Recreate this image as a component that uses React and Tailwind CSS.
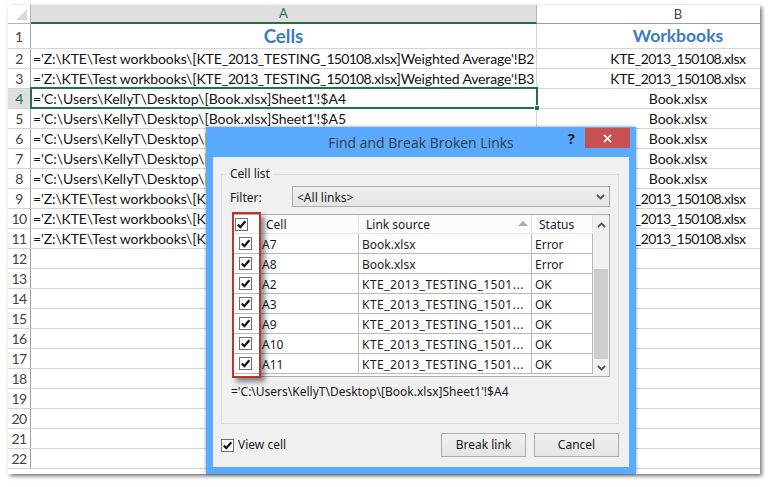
const Z = n => `='Z:\\KTE\\Test workbooks\\[KTE_2013_TESTING_150108.xlsx]Weighted Average'!B${n}`;
const C = n => `='C:\\Users\\KellyT\\Desktop\\[Book.xlsx]Sheet1'!$A${n}`;
const K = "KTE_2013_150108.xlsx";
const B = "Book.xlsx";
const data = [
  [Z(2), K], [Z(3), K], [C(4), B], [C(5), B], [C(6), B], [C(7), B], [C(8), B], [Z(9), K], [Z(10), K], [Z(11), K],
];
const rows = Array.from({ length: 21 }, (_, i) => i + 2);

const links = [
  ["A7", "Book.xlsx", "Error"],
  ["A8", "Book.xlsx", "Error"],
  ["A2", "KTE_2013_TESTING_1501...", "OK"],
  ["A3", "KTE_2013_TESTING_1501...", "OK"],
  ["A9", "KTE_2013_TESTING_1501...", "OK"],
  ["A10", "KTE_2013_TESTING_1501...", "OK"],
  ["A11", "KTE_2013_TESTING_1501...", "OK"],
];

// Lato's figures are wider than the sheet font's, so digit runs get tighter spacing.
function T({ children }) {
  const parts = String(children).split(/(\d+)/);
  return (
    <span>
      {parts.map((p, i) =>
        /^\d/.test(p) ? <span key={i} className="tracking-[-0.7px]">{p}</span> : <span key={i}>{p}</span>
      )}
    </span>
  );
}

function Check() {
  return (
    <span className="flex h-[13px] w-[13px] shrink-0 items-center justify-center border border-[#707070] bg-white">
      <svg viewBox="0 0 11 11" className="h-[11px] w-[11px]">
        <path d="M1.8 5.6 L4.3 8.2 L9.3 2.2" fill="none" stroke="#111" strokeWidth="2.2" />
      </svg>
    </span>
  );
}

function Chevron({ up }) {
  return (
    <svg viewBox="0 0 9 6" className="h-[6px] w-[9px]">
      <path d={up ? "M1 5 L4.5 1.5 L8 5" : "M1 1 L4.5 4.5 L8 1"} fill="none" stroke="#555" strokeWidth="1.8" />
    </svg>
  );
}

function Dialog() {
  return (
    <div className="absolute left-[206px] top-[127px] flex h-[347px] w-[430px] flex-col bg-[#5aabff] font-['Noto_Sans',sans-serif] text-[12px] text-[#1a1a1a] shadow-[0_0_3px_rgba(0,0,0,0.45)]">
      <div className="relative flex h-[30px] shrink-0 items-center justify-center text-[14px] text-[#3a3a3a] font-['Open_Sans',sans-serif]">
        Find and Break Broken Links
        <span className="absolute right-[61px] top-[0px] text-[15px] font-bold text-[#222]">?</span>
        <span className="absolute right-[6px] top-[1px] flex h-[20px] w-[45px] items-center justify-center bg-[#c75050]">
          <svg viewBox="0 0 10 10" className="h-[9px] w-[9px]">
            <path d="M1 1 L9 9 M9 1 L1 9" stroke="#fff" strokeWidth="1.8" />
          </svg>
        </span>
      </div>
      <div className="mb-[7px] ml-[7px] mr-[7px] flex min-h-0 flex-1 flex-col bg-[#f0f0f0] pl-[8px] pr-[10px]">
        <div className="relative mt-[17px] h-[250px] shrink-0 border border-[#dcdcdc] pl-[8px] pr-[8px]">
          <span className="absolute left-[5px] top-[-10px] bg-[#f0f0f0] px-[3px] leading-[18px]">Cell list</span>
          <div className="mt-[11px] flex items-center">
            <span className="w-[62px] shrink-0 pt-[2px]">Filter:</span>
            <div className="flex h-[21px] flex-1 items-center justify-between border border-[#acacac] bg-gradient-to-b from-[#f0f0f0] to-[#e5e5e5] pl-[4px] pr-[4px]">
              <span className="pt-[2px]">&lt;All links&gt;</span>
              <Chevron />
            </div>
          </div>
          <div className="ml-[2px] mt-[7px] flex h-[163px] border border-[#acacac] bg-white">
            <div className="flex w-[360px] shrink-0 flex-col">
              <div className="flex h-[19px] shrink-0 border-b border-[#e5e5e5] bg-[#fafcfe]">
                <div className="flex w-[28px] shrink-0 items-center pl-[2px]"><Check /></div>
                <div className="flex w-[98px] shrink-0 items-center border-r border-[#e5e5e5] pl-[5px] pt-[2px]">Cell</div>
                <div className="relative flex w-[173px] shrink-0 items-center border-r border-[#e5e5e5] pl-[7px] pt-[2px]">
                  Link source
                  <span className="absolute right-[3px] top-[6px] h-0 w-0 border-x-[5px] border-b-[5px] border-x-transparent border-b-[#a8a8a8]"></span>
                </div>
                <div className="flex flex-1 items-center border-r border-[#e5e5e5] pl-[7px] pt-[2px]">Status</div>
              </div>
              {links.map(([cell, src, st]) => (
                <div key={cell} className="flex h-[20px] shrink-0 border-b border-[#b9b9b9]">
                  <div className="flex w-[28px] shrink-0 items-center pl-[6px]"><Check /></div>
                  <div className="flex w-[98px] shrink-0 items-center border-r border-[#b9b9b9] pl-[1px] pt-[2px]">{cell}</div>
                  <div className={`flex w-[173px] shrink-0 items-center whitespace-nowrap border-r border-[#b9b9b9] pl-[3px] pt-[2px] ${src.startsWith("KTE") ? "tracking-[0.5px]" : ""}`}>{src}</div>
                  <div className="flex flex-1 items-center border-r border-[#b9b9b9] pl-[3px] pt-[2px]">{st}</div>
                </div>
              ))}
            </div>
            <div className="flex flex-1 flex-col bg-[#f0f0f0]">
              <div className="flex h-[19px] shrink-0 items-center justify-center"><Chevron up /></div>
              <div className="flex-1"></div>
              <div className="mx-[1px] h-[90px] shrink-0 bg-[#cdcdcd]"></div>
              <div className="flex h-[17px] shrink-0 items-center justify-center"><Chevron /></div>
            </div>
          </div>
          <div className="mt-[6px] pl-[1px] leading-[18px]">='C:\Users\KellyT\Desktop\[Book.xlsx]Sheet1'!$A4</div>
        </div>
        <div className="mt-[9px] flex items-center">
          <Check />
          <span className="ml-[4px]">View cell</span>
          <div className="ml-auto flex gap-[8px]">
            <button className="h-[24px] w-[85px] border border-[#acacac] bg-gradient-to-b from-[#f0f0f0] to-[#e5e5e5]">Break link</button>
            <button className="h-[24px] w-[85px] border border-[#acacac] bg-gradient-to-b from-[#f0f0f0] to-[#e5e5e5]">Cancel</button>
          </div>
        </div>
      </div>
    </div>
  );
}

function Row({ n, a, b, selected }) {
  const tight = a.startsWith("='Z") ? "tracking-[-0.13px]" : "";
  const wbTight = b === K ? "tracking-[-0.4px]" : "";
  return (
    <div className="flex h-[20px] shrink-0 border-b border-[#d4d4d4]">
      <div className={`flex w-[23px] shrink-0 items-center justify-center border-r pt-[1px] ${selected ? "border-[#217346] bg-[#dfdfdf] text-[#217346]" : "border-[#9f9f9f] text-[#444]"}`}><T>{n}</T></div>
      <div className={`flex w-[506px] shrink-0 items-center overflow-hidden whitespace-nowrap border-r border-[#d4d4d4] pl-[2px] pt-[1px] text-[#111] ${tight}`}><T>{a}</T></div>
      <div className={`flex w-[282px] shrink-0 items-center justify-center whitespace-nowrap pt-[1px] text-[#111] ${wbTight}`}><T>{b}</T></div>
    </div>
  );
}

export default function App() {
  return (
    <div className="relative h-[487px] w-[773px] overflow-hidden bg-white">
      <div className="absolute left-[8px] top-[5px] flex h-[469px] w-[752px] flex-col overflow-hidden bg-white font-['Lato',sans-serif] text-[14px] leading-none shadow-[2px_2px_4px_rgba(0,0,0,0.55)]">
        <div className="flex h-[19px] shrink-0">
          <div className="relative w-[23px] shrink-0 border-b border-r border-[#b5b5b5] bg-white">
            <span className="absolute bottom-[3px] right-[3px] h-0 w-0 border-b-[11px] border-l-[11px] border-b-[#d8d8d8] border-l-transparent"></span>
          </div>
          <div className="flex w-[506px] shrink-0 items-center justify-center border-b-2 border-r border-b-[#217346] border-r-[#b5b5b5] bg-[#dfdfdf] text-[13px] text-[#217346]">A</div>
          <div className="flex w-[282px] shrink-0 items-center justify-center border-b border-[#9f9f9f] text-[13px] text-[#444]">B</div>
        </div>
        <div className="flex h-[25px] shrink-0 border-b border-[#d4d4d4]">
          <div className="flex w-[23px] shrink-0 items-center justify-center border-r border-[#9f9f9f] pt-[1px] text-[#444]">1</div>
          <div className="flex w-[506px] shrink-0 items-center justify-center border-r border-[#d4d4d4] text-[18.67px] font-bold text-[#3a7dbf]">Cells</div>
          <div className="flex w-[282px] shrink-0 items-center justify-center text-[17.5px] font-bold text-[#3a7dbf]">Workbooks</div>
        </div>
        {rows.map((n, i) => {
          const d = data[i] || ["", ""];
          return <Row key={n} n={n} a={d[0]} b={d[1]} selected={n === 4} />;
        })}
      </div>
      <div className="pointer-events-none absolute left-[30px] top-[87px] h-[22px] w-[508px] border-2 border-[#217346]">
        <span className="absolute bottom-[-4px] right-[-4px] h-[6px] w-[6px] border border-white bg-[#217346]"></span>
      </div>
      <Dialog />
      <div className="pointer-events-none absolute left-[232px] top-[212px] h-[166px] w-[29px] border-2 border-[#b5392a] shadow-[4px_4px_5px_rgba(0,0,0,0.45)]"></div>
    </div>
  );
}
